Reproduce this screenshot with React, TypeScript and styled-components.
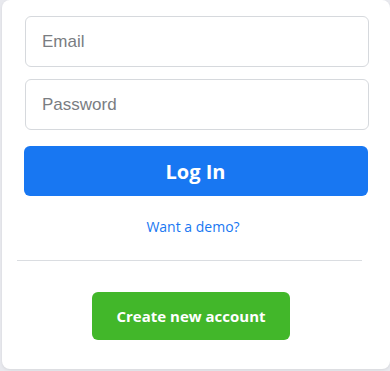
import React from 'react';
import styled, { createGlobalStyle } from 'styled-components';

const GlobalStyle = createGlobalStyle`
  html, body {
    margin: 0;
    padding: 0;
    background: #e8e9ee;
  }
  * {
    box-sizing: border-box;
  }
`;

const Page = styled.div`
  width: 390px;
  height: 371px;
  padding-left: 2px;
`;

const Card = styled.div`
  width: 388px;
  height: 369px;
  background: #ffffff;
  border-radius: 8px;
  box-shadow: 0 1px 3px rgba(0, 0, 0, 0.08);
  padding-top: 16px;
  display: flex;
  flex-direction: column;
`;

const Form = styled.form`
  display: flex;
  flex-direction: column;
  align-items: flex-start;
  padding-left: 23px;
`;

const Input = styled.input`
  width: 344px;
  height: 51px;
  border: 1px solid #d6d9dd;
  border-radius: 6px;
  padding: 0 16px;
  font-family: 'Liberation Sans', Arial, sans-serif;
  font-size: 17px;
  color: #1c1e21;
  margin-bottom: ${(p: { $gap: number }) => p.$gap}px;
  outline: none;

  &::placeholder {
    color: #7a7d82;
  }
`;

const LoginButton = styled.button`
  width: 344px;
  height: 50px;
  margin-left: -1.5px;
  border: none;
  border-radius: 6px;
  background: #1877f2;
  color: #ffffff;
  font-family: 'Open Sans', 'Noto Sans', sans-serif;
  font-size: 20px;
  font-weight: 700;
  cursor: pointer;
`;

const DemoLink = styled.a`
  align-self: center;
  margin: 21px 0 0 -6px;
  font-family: 'Open Sans', 'Noto Sans', sans-serif;
  font-size: 14px;
  color: #1877f2;
  text-decoration: none;
  line-height: 20px;
`;

const Divider = styled.div`
  width: 345px;
  height: 1px;
  background: #dadde1;
  margin: 23px 0 0 15px;
`;

const CreateButton = styled.button`
  align-self: flex-start;
  margin: 31px 0 0 90px;
  width: 198px;
  height: 48px;
  border: none;
  border-radius: 6px;
  background: #42b72a;
  color: #ffffff;
  font-family: 'Open Sans', 'Noto Sans', sans-serif;
  font-size: 15px;
  font-weight: 700;
  cursor: pointer;
`;

const App = () => {
  return (
    <>
      <GlobalStyle />
      <Page>
        <Card>
          <Form onSubmit={(e) => e.preventDefault()}>
            <Input $gap={12} type="text" placeholder="Email" />
            <Input $gap={16} type="password" placeholder="Password" />
            <LoginButton type="submit">Log In</LoginButton>
          </Form>
          <DemoLink href="#">Want a demo?</DemoLink>
          <Divider />
          <CreateButton type="button">Create new account</CreateButton>
        </Card>
      </Page>
    </>
  );
};

export default App;
